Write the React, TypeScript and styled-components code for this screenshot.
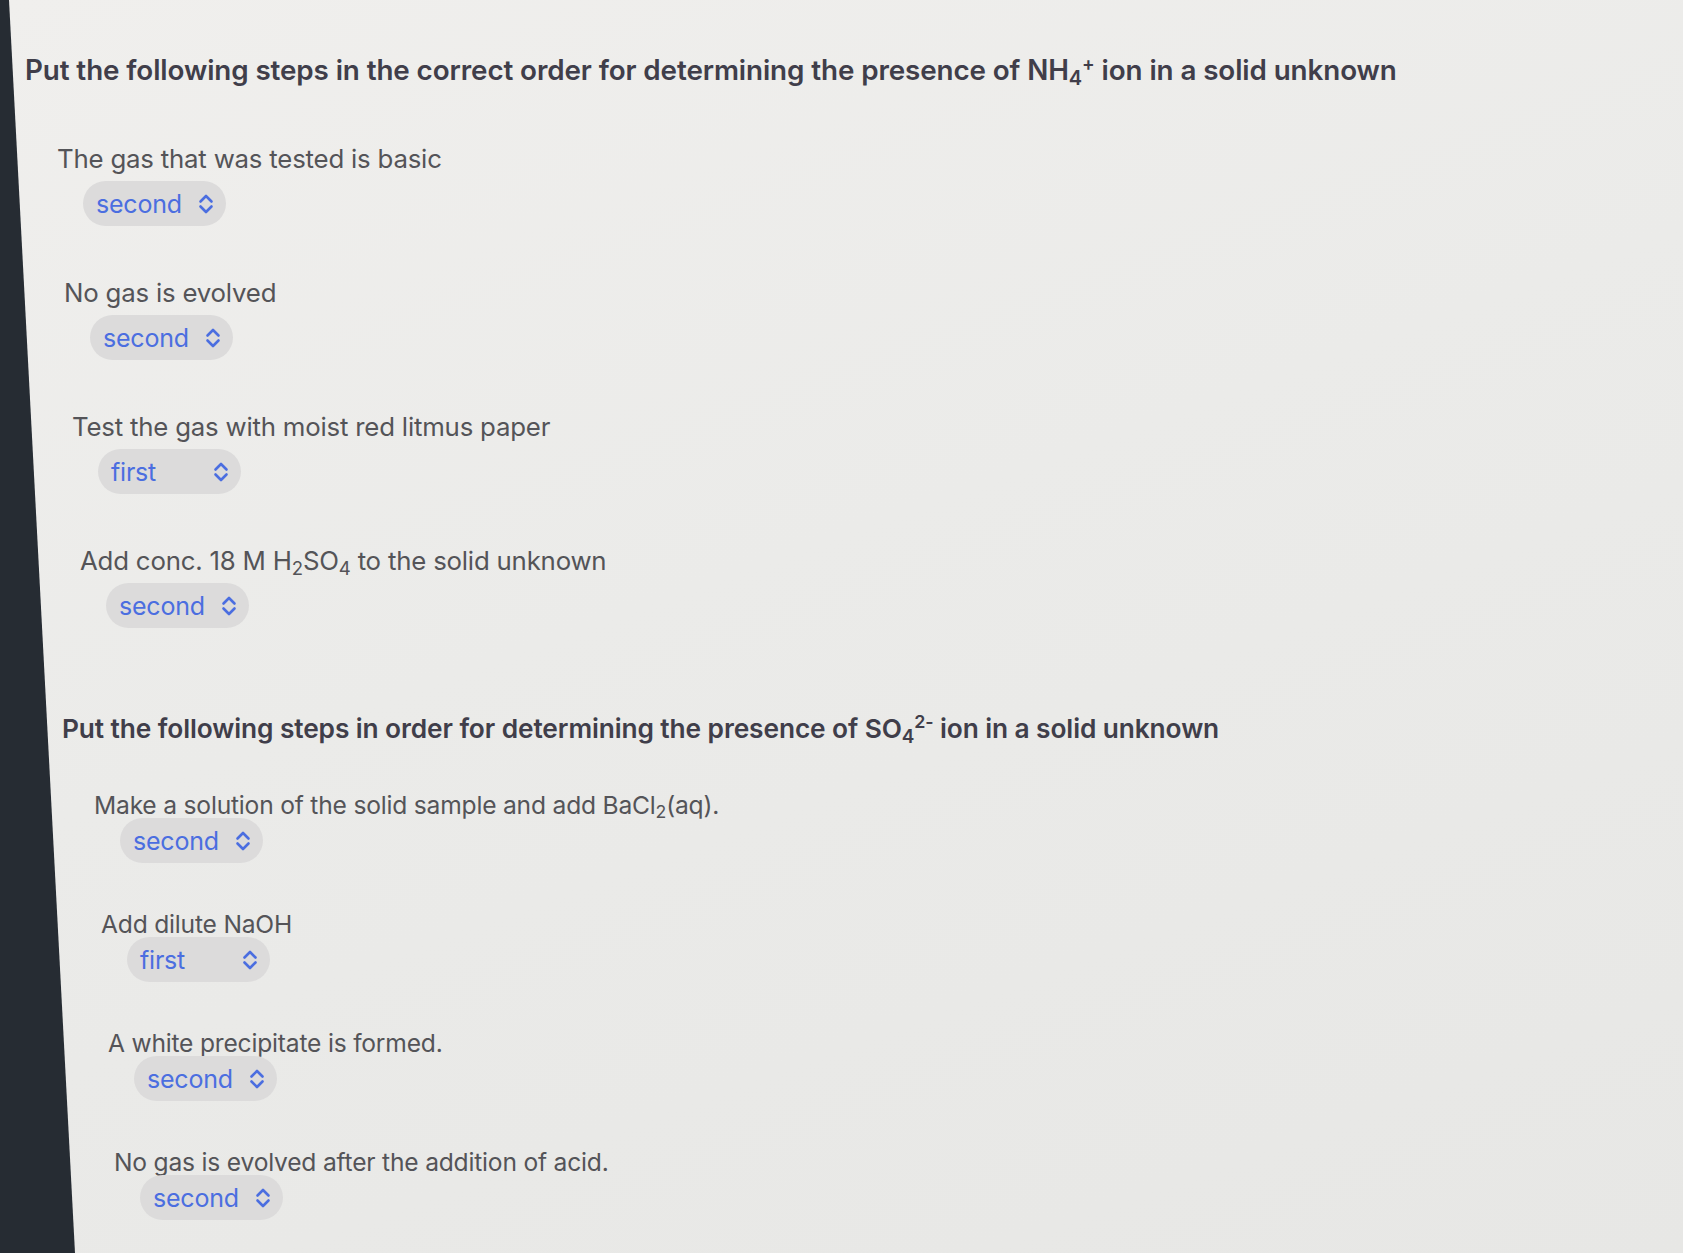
import styled, { createGlobalStyle } from "styled-components";

const GlobalStyle = createGlobalStyle`
  html, body {
    margin: 0;
    padding: 0;
    background: #262c33;
  }
  body {
    font-family: Inter, "Noto Sans", "Liberation Sans", sans-serif;
  }
`;

const Page = styled.div`
  position: relative;
  width: 1683px;
  height: 1253px;
  overflow: hidden;
  background: #262c33;
`;

// the photographed screen, its left edge runs slanted against the dark bezel
const Sheet = styled.main`
  height: 100%;
  box-sizing: border-box;
  padding-top: 54px;
  background: linear-gradient(160deg, #f0efed 0%, #ebebe9 45%, #e7e7e5 100%);
  clip-path: polygon(9px 0, 100% 0, 100% 100%, 75px 100%);
`;

const Section = styled.section<{ $gapAfter?: number }>`
  display: flex;
  flex-direction: column;
  margin-bottom: ${(p) => p.$gapAfter ?? 0}px;
`;

const Title = styled.h2<{ $indent: number; $size: number; $gapBelow: number }>`
  margin: 0 0 ${(p) => p.$gapBelow}px;
  padding-left: ${(p) => p.$indent}px;
  font-size: ${(p) => p.$size}px;
  line-height: 32px;
  font-weight: 600;
  color: #403e4a;
  letter-spacing: -0.1px;
`;

const Item = styled.div<{ $indent: number; $compact?: boolean }>`
  display: flex;
  flex-direction: column;
  align-items: flex-start;
  gap: ${(p) => (p.$compact ? 0 : 7)}px;
  padding-left: ${(p) => p.$indent}px;
  margin-bottom: ${(p) => (p.$compact ? 48 : 52)}px;
`;

const Label = styled.div<{ $compact?: boolean }>`
  font-size: ${(p) => (p.$compact ? 24.6 : 25.8)}px;
  line-height: ${(p) => (p.$compact ? 26 : 30)}px;
  color: #545458;
  letter-spacing: -0.2px;
`;

const Sub = styled.sub`
  font-size: 0.72em;
  vertical-align: -0.25em;
  line-height: 0;
`;

const Sup = styled.sup`
  font-size: 0.68em;
  vertical-align: 0.55em;
  line-height: 0;
`;

const Select = styled.div`
  display: flex;
  align-items: center;
  justify-content: space-between;
  box-sizing: border-box;
  width: 143px;
  height: 45px;
  margin-left: 26px;
  padding: 0 11px 0 13px;
  border-radius: 23px;
  background: #dcdbdb;
  color: #4b6ee0;
  font-size: 25px;
  letter-spacing: -0.2px;
`;

const Chevron = () => (
  <svg width="18" height="24" viewBox="0 0 18 24" fill="none">
    <path
      d="M3.5 9.5 L9 4 L14.5 9.5 M3.5 14.5 L9 20 L14.5 14.5"
      stroke="#4b6ee0"
      strokeWidth="2.6"
      strokeLinecap="round"
      strokeLinejoin="round"
    />
  </svg>
);

type Step = { label: React.ReactNode; value: string; indent: number };

const ammonium: Step[] = [
  { label: "The gas that was tested is basic", value: "second", indent: 57 },
  { label: "No gas is evolved", value: "second", indent: 64 },
  { label: "Test the gas with moist red litmus paper", value: "first", indent: 72 },
  {
    label: (
      <>
        Add conc. 18 M H<Sub>2</Sub>SO<Sub>4</Sub> to the solid unknown
      </>
    ),
    value: "second",
    indent: 80,
  },
];

const sulfate: Step[] = [
  {
    label: (
      <>
        Make a solution of the solid sample and add BaCl<Sub>2</Sub>(aq).
      </>
    ),
    value: "second",
    indent: 94,
  },
  { label: "Add dilute NaOH", value: "first", indent: 101 },
  { label: "A white precipitate is formed.", value: "second", indent: 108 },
  { label: "No gas is evolved after the addition of acid.", value: "second", indent: 114 },
];

function StepRow({ step, compact }: { step: Step; compact?: boolean }) {
  return (
    <Item $indent={step.indent} $compact={compact}>
      <Label $compact={compact}>{step.label}</Label>
      <Select>
        <span>{step.value}</span>
        <Chevron />
      </Select>
    </Item>
  );
}

export default function App() {
  return (
    <Page>
      <GlobalStyle />
      <Sheet>
        <Section $gapAfter={33}>
          <Title $indent={25} $size={27.8} $gapBelow={58}>
            Put the following steps in the correct order for determining the presence of NH
            <Sub>4</Sub>
            <Sup>+</Sup> ion in a solid unknown
          </Title>
          {ammonium.map((s, i) => (
            <StepRow key={i} step={s} />
          ))}
        </Section>
        <Section>
          <Title $indent={62} $size={26.3} $gapBelow={47}>
            Put the following steps in order for determining the presence of SO<Sub>4</Sub>
            <Sup>2-</Sup> ion in a solid unknown
          </Title>
          {sulfate.map((s, i) => (
            <StepRow key={i} step={s} compact />
          ))}
        </Section>
      </Sheet>
    </Page>
  );
}
